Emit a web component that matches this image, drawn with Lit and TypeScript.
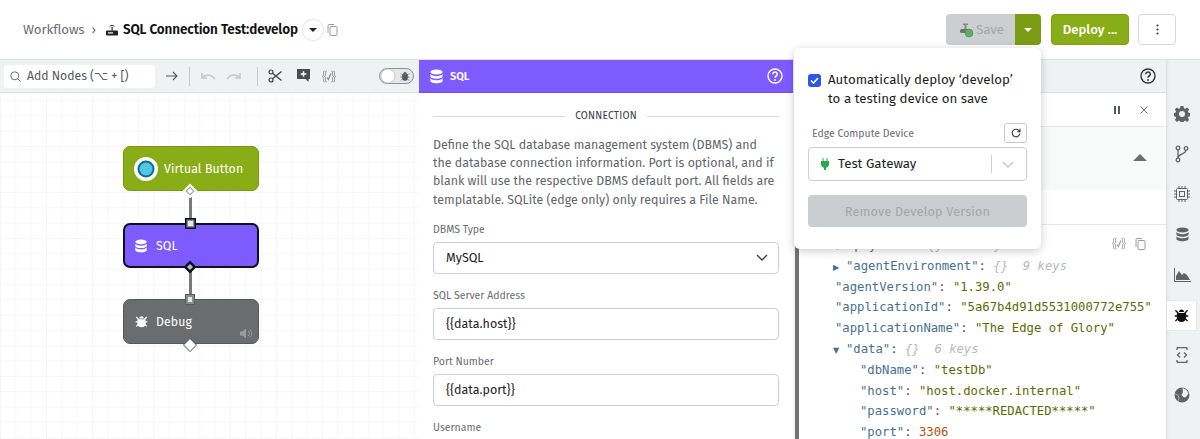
import { LitElement, html, css, svg } from "lit";
import { customElement } from "lit/decorators.js";

const dbIcon = (s: number, c: string) => html`<svg width=${s} height=${s} viewBox="0 0 16 16" fill=${c}><ellipse cx="8" cy="3.2" rx="6.5" ry="2.7"/><path d="M1.500 5.400c1.200 1.500 3.600 2.200 6.500 2.200s5.300-.7 6.500-2.200v2.200c0 1.500-2.900 2.700-6.500 2.700s-6.500-1.200-6.500-2.700z"/><path d="M1.500 9.800c1.200 1.500 3.600 2.200 6.500 2.200s5.300-.7 6.500-2.200v2.700c0 1.500-2.900 2.700-6.500 2.700s-6.500-1.200-6.500-2.700z"/></svg>`;
const bugIcon = (s: number, c: string) => html`<svg width=${s} height=${s} viewBox="0 0 16 16" fill=${c}><path d="M5.200 4.200C5.400 2.600 6.500 1.500 8 1.500s2.600 1.100 2.800 2.700z"/><path d="M4 5.200h8a1 1 0 0 1 1 1V10a5 5 0 0 1-10 0V6.200a1 1 0 0 1 1-1z"/><path d="M1.500 2.500l3 3M14.500 2.500l-3 3M.8 8.500h3M12.200 8.500h3M1.500 14l3-3M14.500 14l-3-3" stroke=${c} stroke-width="1.500" fill="none"/></svg>`;
const helpIcon = (c: string) => html`<svg width="16" height="16" viewBox="0 0 16 16" fill="none" stroke=${c} stroke-width="1.400"><circle cx="8" cy="8" r="7"/><path d="M5.800 6.200a2.200 2.200 0 1 1 3.400 1.800c-.8.500-1.200.9-1.200 1.800" stroke-width="1.500"/><circle cx="8" cy="12" r=".9" fill=${c} stroke="none"/></svg>`;
const copyIcon = (c: string) => html`<svg width="11" height="12" viewBox="0 0 11 12" fill="none" stroke=${c} stroke-width="1"><rect x="3" y="2.500" width="7" height="9" rx="1"/><path d="M1 9V1.500a1 1 0 0 1 1-1h5"/></svg>`;
const jsonIcon = (c: string) => html`<svg width="16" height="13" viewBox="0 0 16 13" fill="none" stroke=${c} stroke-width="1"><path d="M3.500 1C2.500 1 2.500 2 2.500 3.500S2.500 6 1.500 6.500c1 .5 1 1.500 1 3s0 2.500 1 2.500M5.500 1C4.500 1 4.500 2 4.500 3.500S4.500 6 3.500 6.500c1 .5 1 1.500 1 3s0 2.500 1 2.500M12.500 1c1 0 1 1 1 2.500s0 2.500 1 3c-1 .5-1 1.500-1 3s0 2.500-1 2.500M10.500 1c1 0 1 1 1 2.500s0 2.500 1 3c-1 .5-1 1.500-1 3s0 2.500-1 2.500"/><path d="M6 7.500l1.300 2L10 3.500" stroke-width="1.200"/></svg>`;

@customElement("app-root")
export class AppRoot extends LitElement {
  static styles = css`
    :host { display: block; width: 1200px; height: 439px; overflow: hidden; position: relative; background: #fff;
      font-family: "Fira Sans", "Noto Sans", sans-serif; color: #1f2126; }
    * { box-sizing: border-box; }
    .top { height: 60px; display: flex; align-items: center; padding: 0 24px 0 23px; background: #fff; border-bottom: 1px solid #dfe1e3; }
    .crumb { font-size: 13.300px; color: #6b6e76; letter-spacing: -.1px; }
    .sep { margin: 0 10px 0 7px; color: #6b6e76; font-size: 13px; }
    .title { font-size: 13.500px; font-weight: 600; color: #111; margin-left: 5px; letter-spacing: -.12px; white-space: nowrap; }
    .round { width: 22px; height: 22px; border-radius: 50%; border: 1px solid #e6e7e9; display: flex; align-items: center; justify-content: center; margin: 0 3px 0 4px; box-shadow: 0 0 2px rgba(0,0,0,.08); }
    .tri { width: 0; height: 0; border-left: 4px solid transparent; border-right: 4px solid transparent; border-top: 4px solid #222; }
    .tri.w { border-top-color: #fff; }
    .spacer { flex: 1; }
    .save { width: 69px; height: 31px; background: #ccced2; border-radius: 4px 0 0 4px; display: flex; align-items: center; gap: 1px; padding-left: 13px; color: #a4a7ac; font-size: 13.300px; }
    .savedrop { width: 26px; height: 31px; background: #7c9c14; border-radius: 0 4px 4px 0; display: flex; align-items: center; justify-content: center; }
    .deploy { width: 78px; height: 31px; margin-left: 10px; background: #89ad17; border: 1px solid #7fa014; border-radius: 4px; color: #fff; font-size: 13.200px; font-weight: 500; display: flex; align-items: center; justify-content: center; }
    .more { width: 38px; height: 31px; margin-left: 9px; border: 1px solid #d5d7da; border-radius: 4px; display: flex; align-items: center; justify-content: center; }
    .main { display: flex; height: 379px; }
    .left { width: 419px; display: flex; flex-direction: column; flex: none; }
    .toolbar { height: 33px; background: #f0f1f2; border-bottom: 1px solid #dfe1e3; display: flex; align-items: center; padding-left: 4px; flex: none; }
    .search { width: 151px; height: 23px; background: #fff; border-radius: 3px; display: flex; align-items: center; padding-left: 6px; gap: 6px; font-size: 12.200px; color: #55585e; white-space: nowrap; }
    .tools { display: flex; align-items: center; }
    .div { width: 1px; height: 19px; background: #c9cbce; }
    .canvas { flex: 1; position: relative; background-color: #fff;
      background-image: linear-gradient(#f6f6f6 1px, transparent 1px), linear-gradient(90deg, #f6f6f6 1px, transparent 1px);
      background-size: 15.330px 15.330px; background-position: 0 7px; }
    .node { position: absolute; left: 123px; width: 136px; height: 45px; border-radius: 7px; border: 1.500px solid; color: #fff; font-size: 12.300px; display: flex; align-items: center; letter-spacing: .1px; }
    .wire { position: absolute; left: 188.500px; width: 3px; background: #77787a; }
    .port { position: absolute; }
    .panel { width: 374px; flex: none; display: flex; flex-direction: column; background: #fff; overflow: hidden; }
    .divider { width: 6px; flex: none; background: #f5f5f6; border-right: 4px solid #737476; }
    .phead { height: 33px; flex: none; background: #7e5bff; color: #fff; border-bottom: 1px solid #6e4ce8; display: flex; align-items: center; padding: 0 10px; font-size: 11px; font-weight: 600; gap: 6px; }
    .body { padding: 0 14px; }
    .rule { display: flex; align-items: center; gap: 10px; font-size: 10.200px; color: #3d4148; letter-spacing: .2px; height: 14px; margin-top: 15px; }
    .rule i { flex: 1; height: 1px; background: #d8d9db; margin-top: 2px; }
    .desc { margin: 14px 0 0; font-size: 12.400px; line-height: 18.200px; color: #62656a; white-space: nowrap; }
    label { display: block; font-size: 10.500px; color: #6a6d73; height: 14px; line-height: 14px; }
    .field { height: 32px; border: 1px solid #cdd0d3; border-radius: 4px; display: flex; align-items: center; padding: 0 10px 0 12px; font-size: 12.500px; color: #222; margin-top: 5px; justify-content: space-between; }
    .group { margin-top: 15px; }
    .group.first { margin-top: 14px; }
    .debug { flex: 1; display: flex; flex-direction: column; min-width: 0; background: #fff; position: relative; }
    .dhead { height: 33px; flex: none; background: #f0f1f2; border-bottom: 1px solid #dfe1e3; display: flex; align-items: center; justify-content: flex-end; padding-right: 10px; }
    .dctl { height: 34px; flex: none; border-bottom: 1px solid #e6e7e9; display: flex; align-items: center; justify-content: flex-end; gap: 20px; padding-right: 18px; }
    .dexp { height: 63px; flex: none; background: #f8f9f9; display: flex; align-items: center; justify-content: flex-end; padding-right: 19px; }
    .up { width: 0; height: 0; border-left: 7px solid transparent; border-right: 7px solid transparent; border-bottom: 7px solid #6b6e75; margin-top: -2px; }
    .dgap { height: 35px; flex: none; border-bottom: 1px solid #e6e7e9; }
    .json { flex: 1; font-family: "DejaVu Sans Mono", monospace; font-size: 12.240px; color: #47708f; padding-top: 10px; position: relative; overflow: hidden; }
    .icons2 { position: absolute; top: 12px; right: 20px; display: flex; align-items: center; gap: 8px; }
    .ln { height: 20.800px; line-height: 20.800px; white-space: pre; }
    .s { color: #5c6b06; } .n { color: #b04f0f; } .g { color: #b6b8bb; font-style: italic; } .p { color: #4a4a4a; }
    .l0 { padding-left: 35px; } .l1 { padding-left: 36px; } .l2 { padding-left: 61px; }
    .arrow { display: inline-block; width: 13px; color: #47708f; font-size: 8px; margin-left: -1px; font-family: "DejaVu Sans", sans-serif; font-style: normal; }
    .rail { width: 34px; flex: none; background: #f0f1f2; border-left: 1px solid #dfe1e3; box-shadow: inset 4px 0 3px -3px rgba(0,0,0,.06); display: flex; flex-direction: column; padding-top: 34px; }
    .rail .ic { height: 40.200px; width: 30px; display: flex; align-items: center; justify-content: center; flex: none; }
    .rail .ic.on { background: #fff; width: 30px; height: 31px; margin: 4.600px 0; border: 1px solid #e6e7e9; border-left: 0; }
    .pop { position: absolute; left: 794px; top: 48px; width: 247px; height: 201px; background: #fff; border-radius: 6px; box-shadow: 0 2px 10px rgba(0,0,0,.2); padding: 23px 14px 0 14px; z-index: 5; }
    .check { display: flex; gap: 7px; font-size: 13.300px; line-height: 19px; color: #1c1e22; white-space: nowrap; }
    .box { width: 13px; height: 13px; background: #2f54eb; border-radius: 3px; margin-top: 2.500px; flex: none; display: flex; align-items: center; justify-content: center; }
    .devrow { display: flex; justify-content: space-between; align-items: center; margin-top: 14px; height: 20px; font-size: 10.500px; color: #6a6d73; padding-left: 4px; }
    .refresh { width: 23px; height: 20px; border: 1px solid #c9cbce; border-radius: 3px; display: flex; align-items: center; justify-content: center; }
    .select { height: 34px; margin-top: 4px; border: 1px solid #cdd0d3; border-radius: 4px; display: flex; align-items: center; padding-left: 12px; font-size: 13.300px; color: #1c1e22; gap: 9px; }
    .select .vl { width: 1px; height: 18px; background: #cdd0d3; margin-left: auto; }
    .chev { width: 32px; margin-left: -9px; display: flex; justify-content: center; margin-right: 2px; }
    .remove { height: 32px; margin-top: 14px; background: #cbcdd0; border-radius: 4px; color: #a4a6aa; font-size: 12.600px; display: flex; align-items: center; justify-content: center; letter-spacing: .2px; }
  `;

  render() {
    const nodes = html`
      <div class="wire" style="top:98px;height:28px"></div>
      <div class="wire" style="top:174px;height:28px"></div>
      <div class="node" style="top:53px;background:#89ad17;border-color:#789a12;padding-left:10px;gap:6px">
        <svg width="24" height="24" viewBox="0 0 24 24"><circle cx="12" cy="12" r="12" fill="#fff"/><circle cx="12" cy="12" r="8.500" fill="#0f6f86"/><circle cx="12" cy="12" r="6.500" fill="#52c6e6"/></svg>
        Virtual Button
      </div>
      <div class="node" style="top:130px;background:#7e5bff;border-color:#0e1020;border-width:2px;padding-left:9px;gap:8px">${dbIcon(14, "#fff")}SQL</div>
      <div class="node" style="top:206px;background:#6b6c6e;border-color:#58595b;padding-left:11px;gap:8px">${bugIcon(13, "#fff")}Debug
        <svg style="position:absolute;right:5px;bottom:4px" width="13" height="11" viewBox="0 0 13 11" fill="#9b9c9e"><path d="M0 3.500h2.500L6 .5v10L2.500 7.500H0z"/><path d="M8 3a3 3 0 0 1 0 5M10 1.500a5.500 5.500 0 0 1 0 8" stroke="#9b9c9e" fill="none"/></svg>
      </div>
      <svg class="port" style="left:182px;top:90px" width="16" height="16" viewBox="0 0 16 16"><path d="M8 2l6 6-6 6-6-6z" fill="#9aa0a0" stroke="#fff" stroke-width="2"/><path d="M8 5l3 3-3 3-3-3z" fill="#fff"/></svg>
      <svg class="port" style="left:184.500px;top:125px" width="11" height="11" viewBox="0 0 11 11"><rect x=".8" y=".8" width="9.400" height="9.400" fill="#8c8d8f" stroke="#0e1020" stroke-width="1.600"/><rect x="3" y="3" width="5" height="5" fill="#e8e8e8"/></svg>
      <svg class="port" style="left:182px;top:166px" width="16" height="16" viewBox="0 0 16 16"><path d="M8 1.500L14.500 8 8 14.500 1.500 8z" fill="#0e1020"/><path d="M8 5l3 3-3 3-3-3z" fill="#bbb"/></svg>
      <svg class="port" style="left:185px;top:201px" width="10" height="11" viewBox="0 0 10 11"><rect x=".5" y=".5" width="9" height="10" fill="#8c8d8f" stroke="#58595b"/><rect x="3" y="3" width="4" height="5" fill="#e8e8e8"/></svg>
      <svg class="port" style="left:182px;top:244px" width="16" height="16" viewBox="0 0 16 16"><path d="M8 1.500L14.500 8 8 14.500 1.500 8z" fill="#fff" stroke="#4a4b4d"/></svg>`;
    return html`
      <div class="top">
        <span class="crumb">Workflows</span><span class="sep">›</span>
        <svg width="12" height="12" viewBox="0 0 12 12" fill="#222"><rect x="0" y="6.500" width="12" height="5" rx=".8"/><rect x="5.500" y="3" width="1.200" height="3.500"/><path d="M3.500 2.800a3 3 0 0 1 5 0" stroke="#222" fill="none"/><rect x="2" y="8.300" width="5" height="1.200" fill="#fff"/></svg>
        <span class="title">SQL Connection Test:develop</span>
        <span class="round"><span class="tri"></span></span>
        ${copyIcon("#9a9ca0")}
        <span class="spacer"></span>
        <div class="save">
          <svg width="16" height="18" viewBox="0 0 16 18"><rect x="1" y="8" width="10" height="4" rx="1.500" fill="#6f7276"/><rect x="5.500" y="4" width="2" height="4" fill="#85888c"/><rect x="4" y="2.500" width="5" height="1.500" fill="#85888c"/><circle cx="10" cy="12" r="4" fill="#5fae68" stroke="#4a8a52" stroke-width=".6"/></svg>
          <span>Save</span></div>
        <div class="savedrop"><span class="tri w"></span></div>
        <div class="deploy">Deploy ...</div>
        <div class="more"><svg width="3" height="11" viewBox="0 0 3 11" fill="#3a3c40"><circle cx="1.500" cy="1.500" r="1.100"/><circle cx="1.500" cy="5.500" r="1.100"/><circle cx="1.500" cy="9.500" r="1.100"/></svg></div>
      </div>
      <div class="main">
        <div class="left">
          <div class="toolbar">
            <div class="search">
              <svg width="11" height="11" viewBox="0 0 11 11" fill="none" stroke="#6b6e76"><circle cx="4.800" cy="4.800" r="4"/><path d="M7.800 7.800l2.700 2.700"/></svg>
              Add Nodes (⌥ + [)
            </div>
            <div class="tools">
              <svg style="margin-left:11px" width="12" height="10" viewBox="0 0 12 10" fill="none" stroke="#55585e" stroke-width="1.100"><path d="M0 5h11M7 1l4 4-4 4"/></svg>
              <span class="div" style="margin-left:11px"></span>
              <svg style="margin-left:11px" width="15" height="9" viewBox="0 0 15 9" fill="none" stroke="#c6c8cb" stroke-width="1.600"><path d="M1 1v5h5M1.500 6C4 2 10 1.500 14 7"/></svg>
              <svg style="margin-left:10px" width="15" height="9" viewBox="0 0 15 9" fill="none" stroke="#c6c8cb" stroke-width="1.600"><path d="M14 1v5H9M13.500 6C11 2 5 1.500 1 7"/></svg>
              <span class="div" style="margin-left:16px"></span>
              <svg style="margin-left:10px" width="14" height="14" viewBox="0 0 14 14" fill="none" stroke="#3a3c40" stroke-width="1.200"><circle cx="3" cy="3" r="2"/><circle cx="3" cy="11" r="2"/><path d="M4.500 4.300L13.500 11.500M4.500 9.700L13.500 2.500"/></svg>
              <svg style="margin-left:14px;margin-top:-2px" width="15" height="15" viewBox="0 0 15 15" fill="#4a4c50"><path d="M1 1h13v10h-1.500v3l-3-3H1z"/><path d="M7.500 3.200v5.600M4.700 6h5.600" stroke="#fff" stroke-width="1.500"/></svg>
              <span style="margin-left:10px;display:flex">${jsonIcon("#85878b")}</span>
            </div>
            <svg style="margin-left:42px" width="35" height="16" viewBox="0 0 35 16"><rect x=".5" y=".5" width="34" height="15" rx="7.500" fill="#e6e7e8" stroke="#8e9093"/><circle cx="9" cy="8" r="7" fill="#fff" stroke="#c7c8ca"/><g transform="translate(21 3)">${svg`<path d="M2.500 3.500h5v3.500a2.500 2.500 0 0 1-5 0zM3.500 2.800a1.500 1.500 0 0 1 3 0zM1 2.500l1.500 1.500M9 2.500L7.500 4M.5 6h2M7.500 6h2M1 9.500L2.500 8M9 9.500L7.500 8" fill="#55585e" stroke="#55585e" stroke-width=".7"/>`}</g></svg>
          </div>
          <div class="canvas">${nodes}</div>
        </div>
        <div class="panel">
          <div class="phead">${dbIcon(15, "#fff")}<span>SQL</span><span class="spacer"></span>${helpIcon("#fff")}</div>
          <div class="body">
            <div class="rule"><i></i>CONNECTION<i></i></div>
            <p class="desc">Define the SQL database management system (DBMS) and<br>the database connection information. Port is optional, and if<br>blank will use the respective DBMS default port. All fields are<br>templatable. SQLite (edge only) only requires a File Name.</p>
            <div class="group first"><label>DBMS Type</label>
              <div class="field">MySQL<svg width="12" height="7" viewBox="0 0 12 7" fill="none" stroke="#3a3c40" stroke-width="1.300"><path d="M1 1l5 5 5-5"/></svg></div></div>
            <div class="group"><label>SQL Server Address</label><div class="field">{{data.host}}</div></div>
            <div class="group"><label>Port Number</label><div class="field">{{data.port}}</div></div>
            <div class="group"><label>Username</label></div>
          </div>
        </div>
        <div class="divider"></div>
        <div class="debug">
          <div class="dhead">${helpIcon("#333")}</div>
          <div class="dctl">
            <svg width="6" height="8" viewBox="0 0 6 8" fill="#55585e"><rect width="2" height="8"/><rect x="4" width="2" height="8"/></svg>
            <svg width="8" height="8" viewBox="0 0 8 8" stroke="#6b6e76"><path d="M.5.5l7 7M7.500.5l-7 7"/></svg>
          </div>
          <div class="dexp"><span class="up"></span></div>
          <div class="dgap"></div>
          <div class="json">
            <div class="icons2">${jsonIcon("#9a9ca0")}${copyIcon("#9a9ca0")}</div>
            <div class="ln l1"><i class="arrow">▼</i>"payload"<span class="p">:</span><span class="g"> {}  12 keys</span></div>
            <div class="ln l0"><i class="arrow">▶</i>"agentEnvironment"<span class="p">:</span><span class="g"> {}  9 keys</span></div>
            <div class="ln l1">"agentVersion"<span class="p">:</span> <span class="s">"1.39.0"</span></div>
            <div class="ln l1">"applicationId"<span class="p">:</span> <span class="s">"5a67b4d91d5531000772e755"</span></div>
            <div class="ln l1">"applicationName"<span class="p">:</span> <span class="s">"The Edge of Glory"</span></div>
            <div class="ln l0"><i class="arrow">▼</i>"data"<span class="p">:</span><span class="g"> {}  6 keys</span></div>
            <div class="ln l2">"dbName"<span class="p">:</span> <span class="s">"testDb"</span></div>
            <div class="ln l2">"host"<span class="p">:</span> <span class="s">"host.docker.internal"</span></div>
            <div class="ln l2">"password"<span class="p">:</span> <span class="s">"*****REDACTED*****"</span></div>
            <div class="ln l2">"port"<span class="p">:</span> <span class="n">3306</span></div>
          </div>
        </div>
        <div class="rail">
          <div class="ic"><svg width="16" height="16" viewBox="0 0 16 16"><path fill="#606266" fill-rule="evenodd" d="M6.500 0h3l.4 2.200 1.300.6 1.900-1.300 2.100 2.100-1.300 1.900.6 1.300 2 .4v3l-2 .4-.6 1.300 1.300 1.900-2.100 2.100-1.900-1.300-1.300.6-.4 2h-3l-.4-2-1.300-.6-1.900 1.300-2.100-2.100 1.300-1.900-.6-1.300-2-.4v-3l2-.4.6-1.300-1.300-1.900 2.100-2.100 1.900 1.300 1.300-.6zM8 5a3 3 0 1 0 0 6 3 3 0 0 0 0-6z"/></svg></div>
          <div class="ic"><svg width="14" height="18" viewBox="0 0 14 18" fill="none" stroke="#606266" stroke-width="1.300"><circle cx="3" cy="3" r="1.800"/><circle cx="3" cy="15" r="1.800"/><circle cx="11" cy="3.500" r="1.800"/><path d="M3 4.800v8.400M11 5.300c0 4-8 3-8 8"/></svg></div>
          <div class="ic"><svg width="16" height="16" viewBox="0 0 16 16" fill="none" stroke="#606266"><rect x="2.500" y="2.500" width="11" height="11" rx="1"/><rect x="5.500" y="5.500" width="5" height="5"/><path d="M5 0v2.500M8 0v2.500M11 0v2.500M5 13.500V16M8 13.500V16M11 13.500V16M0 5h2.500M0 8h2.500M0 11h2.500M13.500 5H16M13.500 8H16M13.500 11H16"/></svg></div>
          <div class="ic">${dbIcon(15, "#606266")}</div>
          <div class="ic"><svg width="17" height="14" viewBox="0 0 17 14"><path d="M.5 0v13.500H17" stroke="#606266" fill="none"/><path d="M2 12V8l3-5 3 4 2-2 3 2 3 5z" fill="#606266"/></svg></div>
          <div class="ic on">${bugIcon(15, "#111")}</div>
          <div class="ic"><svg width="12" height="16" viewBox="0 0 12 16" fill="none" stroke="#606266" stroke-width="1.300"><path d="M1 3V1.500a1 1 0 0 1 1-1h8a1 1 0 0 1 1 1V3M1 13v1.500a1 1 0 0 0 1 1h8a1 1 0 0 0 1-1V13M4 5.500L1.500 8 4 10.500M8 5.500L10.500 8 8 10.500"/></svg></div>
          <div class="ic"><svg width="16" height="16" viewBox="0 0 16 16"><circle cx="8" cy="8" r="7.500" fill="#606266"/><path d="M8.500 1c3 .5 5.500 3 6 5.500L12 10l-2 .5L7.500 8l1.500-3z" fill="#f0f1f2"/><path d="M1 7l3 1 1 3-1 3" fill="none" stroke="#f0f1f2" stroke-width=".5"/></svg></div>
        </div>
      </div>
      <div class="pop">
        <div class="check">
          <span class="box"><svg width="9" height="7" viewBox="0 0 9 7" fill="none" stroke="#fff" stroke-width="1.600"><path d="M1 3.500l2.500 2.500L8 1"/></svg></span>
          <span>Automatically deploy ‘develop’<br>to a testing device on save</span>
        </div>
        <div class="devrow"><span>Edge Compute Device</span>
          <span class="refresh"><svg width="10" height="10" viewBox="0 0 10 10" fill="none" stroke="#3a3c40" stroke-width="1.100"><path d="M8.800 5.500a3.800 3.800 0 1 1-1.100-3.200L9 3.500M9 .8v2.900H6.200"/></svg></span></div>
        <div class="select">
          <svg width="8" height="12" viewBox="0 0 8 12" fill="#2fa84a"><path d="M1.500 0h1v3h3V0h1v3H8v3a4 4 0 0 1-3 3.800V12H3V9.800A4 4 0 0 1 0 6V3h1.500z"/></svg>
          Test Gateway<span class="vl"></span>
          <span class="chev"><svg width="12" height="7" viewBox="0 0 12 7" fill="none" stroke="#c6c8cb" stroke-width="1.500"><path d="M1 1l5 5 5-5"/></svg></span>
        </div>
        <div class="remove">Remove Develop Version</div>
      </div>`;
  }
}
